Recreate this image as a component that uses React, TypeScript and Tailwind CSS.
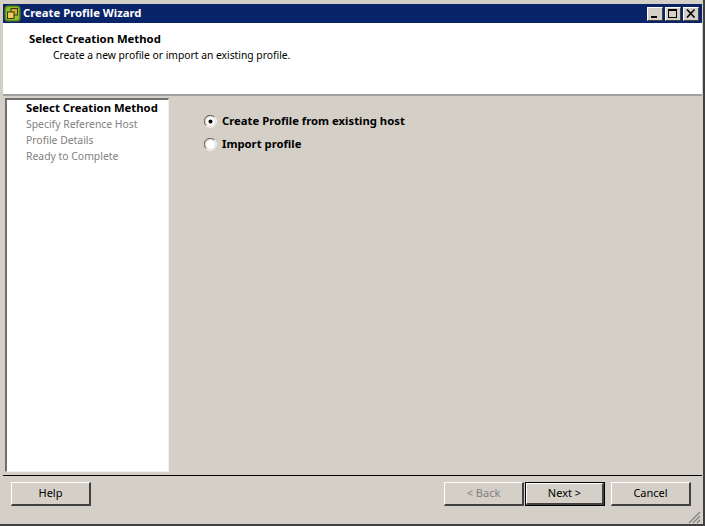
function WinButton({ label, disabled, primary, className }: { label: string; disabled?: boolean; primary?: boolean; className?: string }) {
  return (
    <div className={`h-[24px] ${primary ? 'border border-black' : ''} ${className || ''}`}>
      <div className={`h-full flex items-center justify-center text-[11px] border-t border-l border-t-white border-l-white border-b-2 border-r-2 border-b-[#404040] border-r-[#404040] ${disabled ? 'text-[#808080]' : 'text-black'}`}>
        {label}
      </div>
    </div>
  );
}

function Radio({ checked, label }: { checked?: boolean; label: string }) {
  return (
    <div className="flex items-center h-[16px]">
      <svg width="13" height="13" viewBox="0 0 13 13" className="ml-[-1px]">
        <path d="M2 10.5A5.5 5.5 0 0 1 10.5 2" fill="none" stroke="#606060" />
        <path d="M10.5 2A5.5 5.5 0 0 1 2 10.5" fill="none" stroke="#ffffff" />
        <circle cx="6.5" cy="6.5" r="4.5" fill="#ffffff" />
        {checked && <circle cx="6.5" cy="6.5" r="2" fill="#000000" />}
      </svg>
      <span className="ml-[5px] font-bold text-[11.3px] text-black">{label}</span>
    </div>
  );
}

function TitleButton({ children }: { children: React.ReactNode }) {
  return (
    <div className="w-[16px] h-[14px] bg-[#d4d0c8] border-t border-l border-t-white border-l-white border-b border-r border-b-[#404040] border-r-[#404040] flex items-center justify-center">
      <svg width="10" height="9" viewBox="0 0 10 9">{children}</svg>
    </div>
  );
}

export default function App() {
  return (
    <div className="w-[705px] h-[526px] bg-[#d4d0c8] flex flex-col overflow-hidden border-b-2 border-r-2 border-b-[#404040] border-r-[#404040] pl-[3px] pr-[1px] pt-[4px] text-black" style={{ fontFamily: '"Noto Sans", sans-serif' }}>
      <div className="h-[19px] shrink-0 bg-[#0a246a] flex items-center pl-[1px] pr-[3px]">
        <svg width="17" height="17" viewBox="0 0 17 17">
          <rect x="0.5" y="0.5" width="16" height="16" rx="3.5" fill="#5f8a18" />
          <rect x="2" y="2" width="13" height="13" rx="2.5" fill="#94bc30" />
          <rect x="7" y="3.5" width="6.5" height="6.5" fill="#d8a838" stroke="#2e3a10" />
          <rect x="3.5" y="7" width="6.5" height="6.5" fill="#f2cc5c" stroke="#2e3a10" />
        </svg>
        <span className="ml-[2px] text-white font-bold text-[11.3px]">Create Profile Wizard</span>
        <div className="ml-auto flex">
          <TitleButton><rect x="1" y="7" width="6" height="2" fill="#000" /></TitleButton>
          <div className="w-[2px]" />
          <TitleButton><path d="M0 0h9v9h-9z M1 2v6h7v-6z" fill="#000" fillRule="evenodd" /></TitleButton>
          <div className="w-[2px]" />
          <TitleButton><path d="M1 0.5l7.5 8M8.5 0.5l-7.5 8" stroke="#000" strokeWidth="1.6" fill="none" /></TitleButton>
        </div>
      </div>

      <div className="h-[73px] shrink-0 bg-white border-b-2 border-b-[#a0a0a0] pl-[26px] pt-[9px]">
        <div className="font-bold text-[11.3px] leading-[14px]">Select Creation Method</div>
        <div className="mt-[2px] pl-[24px] text-[10.3px] leading-[14px]">Create a new profile or import an existing profile.</div>
      </div>

      <div className="flex-1 flex min-h-0 pt-[2px] pl-[2px]">
        <div className="w-[164px] h-[374px] shrink-0 bg-white border-t-2 border-l-2 border-t-[#707070] border-l-[#707070] border-r border-b border-r-[#f0f0f0] border-b-[#f0f0f0] pl-[19px]">
          <div className="h-[16px] leading-[16px] font-bold text-[11.3px] whitespace-nowrap">Select Creation Method</div>
          <div className="h-[16px] leading-[16px] text-[10.4px] text-[#808080] whitespace-nowrap">Specify Reference Host</div>
          <div className="h-[16px] leading-[16px] text-[10.4px] text-[#808080] whitespace-nowrap">Profile Details</div>
          <div className="h-[16px] leading-[16px] text-[10.4px] text-[#808080] whitespace-nowrap">Ready to Complete</div>
        </div>
        <div className="flex-1 pl-[36px] pt-[15px] flex flex-col gap-[7px]">
          <Radio checked label="Create Profile from existing host" />
          <Radio label="Import profile" />
        </div>
      </div>

      <div className="h-[49px] shrink-0 border-t border-t-black relative flex items-start pt-[6px] pl-[8px] pr-[11px]">
        <WinButton label="Help" className="w-[80px]" />
        <WinButton label="< Back" disabled className="w-[80px] ml-auto" />
        <WinButton label="Next >" primary className="w-[80px] ml-[1px]" />
        <WinButton label="Cancel" className="w-[80px] ml-[6px]" />
        <svg width="13" height="13" viewBox="0 0 13 13" className="absolute right-[1px] bottom-[0px]">
          <path d="M12 1L1 12M12 5L5 12M12 9L9 12" stroke="#808080" strokeWidth="1.2" fill="none" />
        </svg>
      </div>
    </div>
  );
}
